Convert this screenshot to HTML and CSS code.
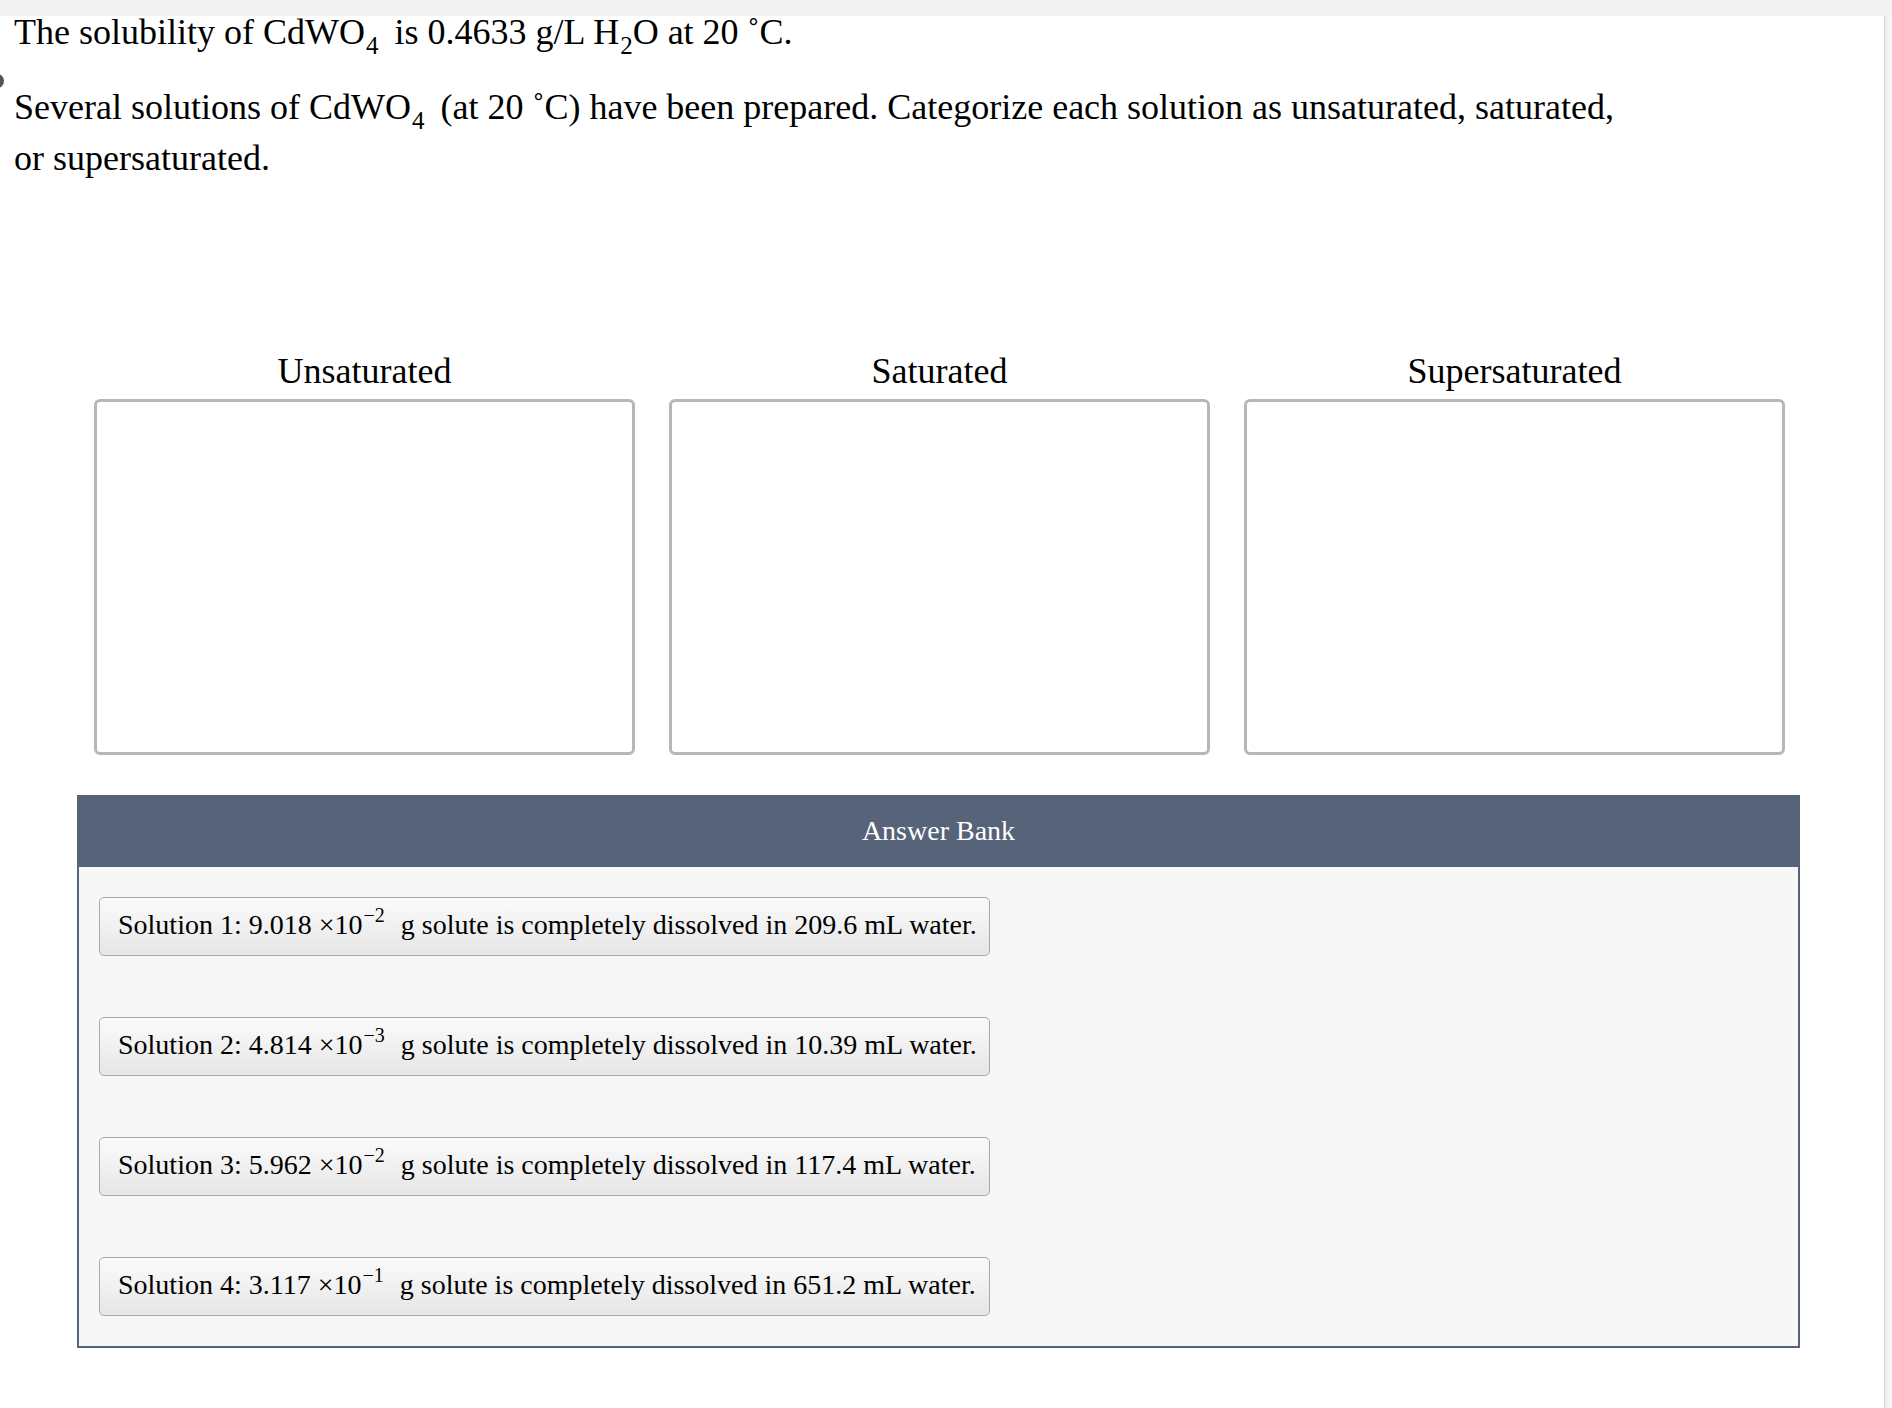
FILE: index.html
```html
<!DOCTYPE html>
<html lang="en">
<head>
<meta charset="utf-8">
<title>Solubility of CdWO4</title>
<link rel="stylesheet" href="styles.css">
</head>
<body>
<div class="topbar"></div>
<div class="frame">
  <main class="page">
    <span class="edge-mark"></span>
    <p class="intro">The solubility of CdWO<sub class="gap">4</sub> is 0.4633 g/L H<sub>2</sub>O at 20 ˚C.</p>
    <p class="question">Several solutions of CdWO<sub class="gap">4</sub> (at 20 ˚C) have been prepared. Categorize each solution as unsaturated, saturated, or supersaturated.</p>

    <div class="bins">
      <div class="bin">
        <div class="bin-title">Unsaturated</div>
        <div class="bin-box"></div>
      </div>
      <div class="bin">
        <div class="bin-title">Saturated</div>
        <div class="bin-box"></div>
      </div>
      <div class="bin">
        <div class="bin-title">Supersaturated</div>
        <div class="bin-box"></div>
      </div>
    </div>

    <section class="bank">
      <div class="bank-head">Answer Bank</div>
      <div class="bank-body">
        <div class="chip">Solution 1: 9.018 ×10<sup>−2</sup> g solute is completely dissolved in 209.6 mL water.</div>
        <div class="chip">Solution 2: 4.814 ×10<sup>−3</sup> g solute is completely dissolved in 10.39 mL water.</div>
        <div class="chip">Solution 3: 5.962 ×10<sup>−2</sup> g solute is completely dissolved in 117.4 mL water.</div>
        <div class="chip">Solution 4: 3.117 ×10<sup>−1</sup> g solute is completely dissolved in 651.2 mL water.</div>
      </div>
    </section>
  </main>
  <div class="gutter"></div>
</div>
</body>
</html>
```

FILE: styles.css
```css
* { box-sizing: border-box; }

html, body {
  margin: 0;
  padding: 0;
  background: #ffffff;
}

body {
  font-family: "Liberation Serif", "Times New Roman", serif;
  color: #000;
  width: 1892px;
  height: 1408px;
  overflow: hidden;
}

.topbar {
  height: 16px;
  background: #f2f2f2;
}

.frame {
  display: flex;
  height: 1392px;
}

.page {
  position: relative;
  width: 1885px;
  border-right: 1px solid #d2d2d2;
  background: #fff;
}

.gutter {
  flex: 1;
  background: linear-gradient(to right, #ececec, #fbfbfb);
}

.edge-mark {
  position: absolute;
  left: -9px;
  top: 58px;
  width: 13px;
  height: 14px;
  border-radius: 50%;
  background: #555;
}

.intro,
.question {
  margin: 0;
  padding-left: 14px;
  font-size: 36px;
  letter-spacing: 0;
}

.intro {
  line-height: 36px;
  margin-top: -2px;
}

.question {
  margin-top: 32px;
  line-height: 51px;
  width: 1640px;
}

sub {
  font-size: 25px;
  vertical-align: -10px;
  line-height: 0;
  margin-left: 1px;
}

sub.gap {
  margin-right: 7px;
}

.bins {
  display: flex;
  gap: 34px;
  margin: 169px 0 0 94px;
  width: 1691px;
}

.bin {
  flex: 1;
  display: flex;
  flex-direction: column;
}

.bin-title {
  text-align: center;
  font-size: 36px;
  line-height: 36px;
  margin-bottom: 10px;
}

.bin-box {
  height: 356px;
  border: 3px solid #b7b7b7;
  border-radius: 6px;
  background: #fff;
}

.bank {
  margin: 40px 0 0 77px;
  width: 1723px;
  border: 2px solid #566379;
  border-top: 0;
  background: #f7f7f7;
}

.bank-head {
  height: 72px;
  margin: 0 -2px;
  background: #566379;
  color: #fff;
  text-align: center;
  font-size: 28px;
  line-height: 72px;
}

.bank-body {
  padding: 30px 20px 30px 20px;
  display: flex;
  flex-direction: column;
  align-items: flex-start;
  gap: 61px;
}

.chip {
  width: 891px;
  height: 59px;
  padding: 10px 0 0 18px;
  border: 1.5px solid #a9a9a9;
  border-radius: 5px;
  background: linear-gradient(to bottom, #fbfbfb, #e6e6e6);
  font-size: 28px;
  line-height: 34px;
  white-space: nowrap;
}

.chip sup {
  font-size: 20px;
  line-height: 0;
  vertical-align: 12px;
  margin-right: 9px;
  margin-left: 1px;
}
```
